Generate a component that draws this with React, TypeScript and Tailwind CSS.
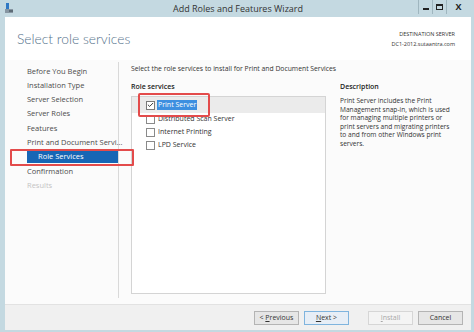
import { Check } from 'lucide-react'

const NAV = [
  'Before You Begin',
  'Installation Type',
  'Server Selection',
  'Server Roles',
  'Features',
  'Print and Document Servi...',
]

const ROLES = ['Distributed Scan Server', 'Internet Printing', 'LPD Service']

function Btn({ label, hot, focused, disabled }: { label: string; hot?: number; focused?: boolean; disabled?: boolean }) {
  return (
    <div
      className={
        'w-[45px] h-[14px] flex items-center justify-center text-[7px] border ' +
        (focused
          ? 'border-[#7fb4de] bg-[#e7eef6] text-[#333]'
          : disabled
          ? 'border-[#d6d6d6] bg-[#f4f4f4] text-[#a8a8a8]'
          : 'border-[#b4b4b4] bg-[#e6e6e6] text-[#333]')
      }
    >
      {hot === undefined ? (
        label
      ) : (
        <span>
          {label.slice(0, hot)}
          <span className="underline">{label[hot]}</span>
          {label.slice(hot + 1)}
        </span>
      )}
    </div>
  )
}

export default function App() {
  return (
    <div
      className="w-[474px] h-[332px] bg-[#c4d9e1] flex flex-col overflow-hidden relative"
      style={{ fontFamily: '"Open Sans", "Noto Sans", sans-serif' }}
    >
      {/* Title bar */}
      <div className="h-[17px] flex items-center relative shrink-0">
        <svg className="absolute left-[5px] top-[3px]" width="9" height="10" viewBox="0 0 9 10">
          <rect x="1" y="0" width="3" height="7" fill="#2f78c4" />
          <rect x="0" y="6" width="8" height="4" fill="#8796a2" />
          <rect x="4" y="7" width="4" height="2" fill="#5d6b76" />
        </svg>
        <div className="flex-1 text-center text-[9px] text-[#333] pl-[2px]">Add Roles and Features Wizard</div>
        <div className="absolute right-[4px] top-0 flex h-[14px]">
          <div className="w-[14px] h-[14px] flex items-end justify-center pb-[4px] border-l border-[#9fb6bf]">
            <div className="w-[6px] h-[2px] bg-[#222]" />
          </div>
          <div className="w-[14px] h-[14px] flex items-center justify-center border-l border-[#9fb6bf]">
            <div className="w-[7px] h-[6px] border border-[#222] border-t-2" />
          </div>
          <div className="w-[24px] h-[14px] flex items-center justify-center border-l border-[#9fb6bf] text-[9px] font-bold text-[#222]">
            X
          </div>
        </div>
      </div>

      {/* Client area */}
      <div className="flex-1 flex pl-[5px] pr-[3px] pb-[2px] min-h-0">
        <div className="flex-1 flex flex-col bg-[#fbfbfb] min-h-0">
          {/* Header */}
          <div className="h-[43px] bg-white flex justify-between items-start shrink-0">
            <div
              className="pl-[12px] pt-[13px] text-[13.8px] font-light leading-[18px] text-[#54718a]"
              style={{ fontFamily: 'Lato, "Open Sans", sans-serif' }}
            >
              Select role services
            </div>
            <div className="pr-[16px] pt-[12px] text-right text-[5.5px] leading-[10px] text-[#333]">
              <div>DESTINATION SERVER</div>
              <div>DC1-2012.sutaantra.com</div>
            </div>
          </div>

          {/* Main */}
          <div className="flex-1 flex min-h-0">
            {/* Nav */}
            <div className="w-[114px] shrink-0 border-r border-[#d9d9d9] mt-[2px] mb-[6px] pt-[2px] text-[7.5px] text-[#4c4c4c]">
              {NAV.map((n) => (
                <div key={n} className="h-[14.3px] flex items-center pl-[22px] whitespace-nowrap">
                  {n}
                </div>
              ))}
              <div className="h-[14.3px] flex items-center pl-[22px]">
                <div className="h-[13px] w-[91px] bg-[#1766b5] text-white pl-[11px] flex items-center">Role Services</div>
              </div>
              <div className="h-[14.3px] flex items-center pl-[22px]">Confirmation</div>
              <div className="h-[14.3px] flex items-center pl-[22px] text-[#c4c4c4]">Results</div>
            </div>

            {/* Content */}
            <div className="flex-1 flex flex-col pl-[12px] pt-[4px] min-w-0">
              <div className="text-[6.8px] text-[#333] leading-[9px]">
                Select the role services to install for Print and Document Services
              </div>
              <div className="flex flex-1 mt-[9px] mb-[10px] min-h-0">
                <div className="w-[195px] flex flex-col">
                  <div className="text-[7px] font-semibold text-[#222] leading-[9px]">Role services</div>
                  <div className="flex-1 mt-[5px] bg-white border border-[#d4d4d4]">
                    <div className="h-[16px] bg-[#ebebeb] flex items-center pl-[14px]">
                      <div className="w-[9px] h-[9px] border border-[#7a7a7a] bg-white flex items-center justify-center">
                        <Check size={8} strokeWidth={3} className="text-[#222]" />
                      </div>
                      <span className="ml-[2px] px-[1px] bg-[#3d8fe0] text-white text-[7px] leading-[10px]">Print Server</span>
                    </div>
                    {ROLES.map((r) => (
                      <div key={r} className="h-[13px] flex items-center pl-[14px]">
                        <div className="w-[9px] h-[9px] border border-[#8a8a8a] bg-white" />
                        <span className="ml-[3px] text-[7px] text-[#333]">{r}</span>
                      </div>
                    ))}
                  </div>
                </div>
                <div className="flex-1 pl-[14px] pr-[14px] text-[6.6px] text-[#333]">
                  <div className="font-semibold leading-[9px] text-[7px] text-[#222]">Description</div>
                  <div className="mt-[6px] leading-[8.5px]">
                    Print Server includes the Print Management snap-in, which is used for managing multiple printers or
                    print servers and migrating printers to and from other Windows print servers.
                  </div>
                </div>
              </div>
            </div>
          </div>

          {/* Footer */}
          <div className="h-[26px] shrink-0 bg-[#f0f0f0] border-t border-[#e2e2e2] flex items-center justify-end pr-[8px] pt-[1px]">
            <div className="flex gap-[5px]">
              <Btn label="< Previous" hot={2} />
              <Btn label="Next >" hot={0} focused />
            </div>
            <div className="flex gap-[5px] ml-[19px]">
              <Btn label="Install" hot={0} disabled />
              <Btn label="Cancel" />
            </div>
          </div>
        </div>
      </div>

      {/* Red annotation boxes */}
      <div className="absolute left-[10px] top-[149px] w-[124px] h-[17px] border-2 border-[#e34b4b] rounded-[1px]" />
      <div className="absolute left-[138px] top-[93px] w-[72px] h-[24px] border-2 border-[#e34b4b] rounded-[2px]" />
    </div>
  )
}
